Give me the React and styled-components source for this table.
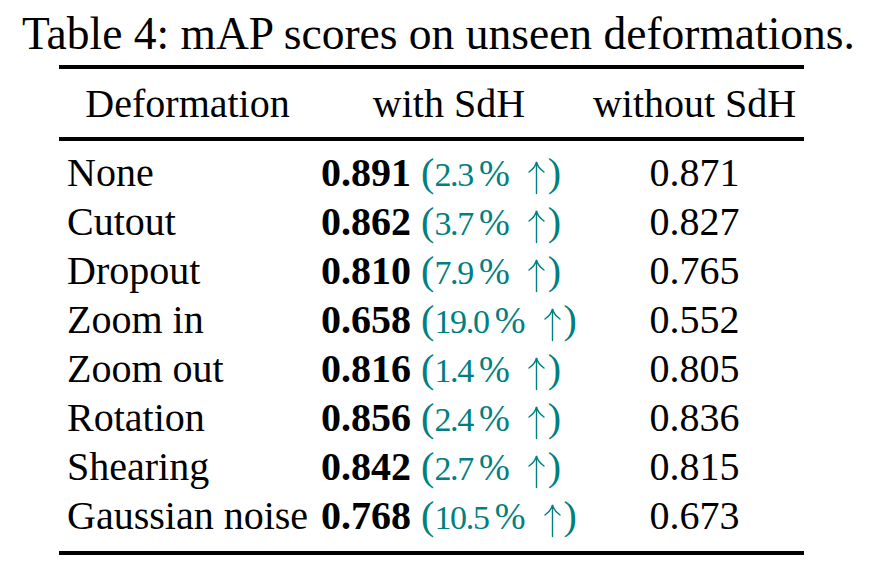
import React from "react";
import styled, { createGlobalStyle } from "styled-components";

const GlobalStyle = createGlobalStyle`
body {
  margin: 0;
  background: #fff;
  color: #000;
  font-family: "Liberation Serif", "Times New Roman", serif;
}
`;

const Figure = styled.div`
display: flex;
flex-direction: column;
align-items: flex-start;
padding-top: 7px;
`;

const Caption = styled.div`
font-size: 45.5px;
line-height: 54px;
margin-left: 22px;
margin-bottom: 4px;
white-space: nowrap;
`;

const Table = styled.table`
margin-left: 59px;
border-collapse: separate;
border-spacing: 0;
font-size: 40px;
line-height: 49px;
`;

const Th = styled.th`
font-weight: normal;
text-align: center;
padding: 10px 8px 9px;
border-top: 4px solid #000;
border-bottom: 4px solid #000;
white-space: nowrap;
&:first-child {
  padding-right: 5px;
}
`;

const Row = styled.tr`
&:first-child td {
  padding-top: 7px;
}
&:last-child td {
  padding-bottom: 11px;
  border-bottom: 4px solid #000;
}
`;

const Td = styled.td`
text-align: ${(p) => p.$align || "center"};
padding: 0 8px;
white-space: nowrap;
&:first-child {
  padding-right: 5px;
}
`;

const Score = styled.b`
font-weight: bold;
`;

const Gain = styled.span`
color: #008080;
`;

const Num = styled.span`
font-size: 34px;
line-height: 1;
letter-spacing: -1.3px;
`;

const Pct = styled.span`
font-size: 37px;
line-height: 1;
margin-left: 6px;
`;

const ArrowSvg = styled.svg`
width: 17px;
height: 33px;
margin: 0 3px 0 18px;
vertical-align: -8px;
overflow: visible;
`;

const UpArrow = () => (
  <ArrowSvg viewBox="0 0 17 33" fill="none" stroke="#008080" strokeWidth="1.4" strokeLinecap="round">
    <path d="M8.5 1.5 L8.5 32.5" />
    <path d="M1 11 C4.5 8.5 7.5 5.5 8.5 1 C9.5 5.5 12.5 8.5 16 11" />
  </ArrowSvg>
);

const rows = [
  ["None", "0.891", "2.3", "0.871"],
  ["Cutout", "0.862", "3.7", "0.827"],
  ["Dropout", "0.810", "7.9", "0.765"],
  ["Zoom in", "0.658", "19.0", "0.552"],
  ["Zoom out", "0.816", "1.4", "0.805"],
  ["Rotation", "0.856", "2.4", "0.836"],
  ["Shearing", "0.842", "2.7", "0.815"],
  ["Gaussian noise", "0.768", "10.5", "0.673"],
];

export default function App() {
  return (
    <>
      <GlobalStyle />
      <Figure>
        <Caption>Table 4: mAP scores on unseen deformations.</Caption>
        <Table>
          <thead>
            <tr>
              <Th>Deformation</Th>
              <Th>with SdH</Th>
              <Th>without SdH</Th>
            </tr>
          </thead>
          <tbody>
            {rows.map(([name, score, gain, base]) => (
              <Row key={name}>
                <Td $align="left">{name}</Td>
                <Td $align="left">
                  <Score>{score}</Score>{" "}
                  <Gain>
                    (<Num>{gain}</Num>
                    <Pct>%</Pct>
                    <UpArrow />)
                  </Gain>
                </Td>
                <Td>{base}</Td>
              </Row>
            ))}
          </tbody>
        </Table>
      </Figure>
    </>
  );
}
